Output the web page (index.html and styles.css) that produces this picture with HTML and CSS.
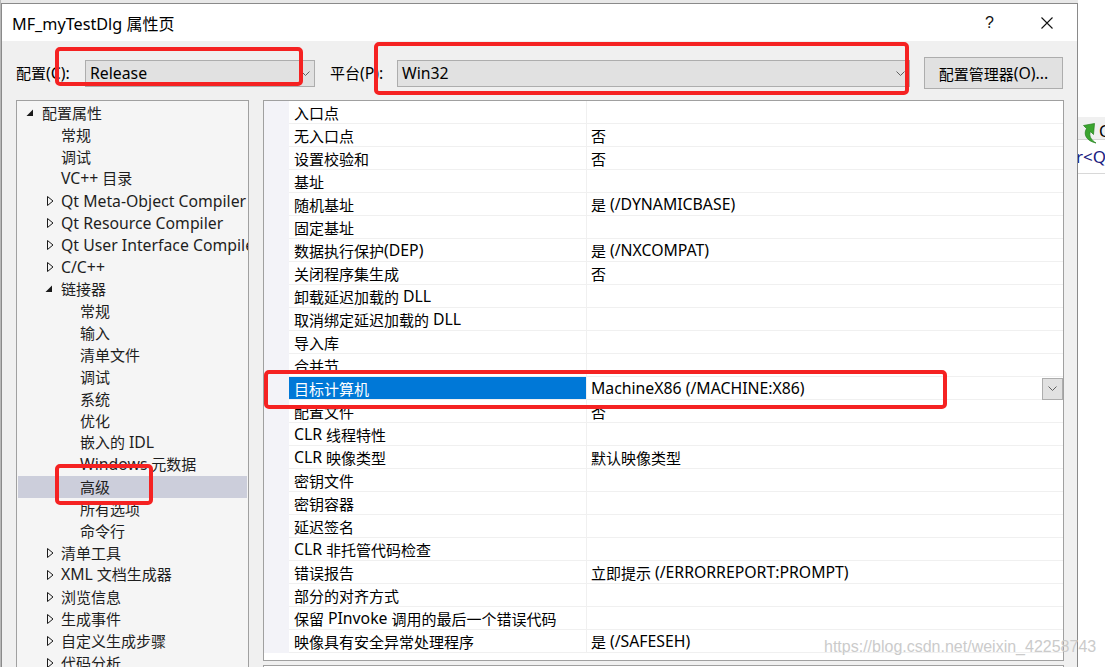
FILE: index.html
```html
<!DOCTYPE html>
<html>
<head>
<meta charset="utf-8">
<link rel="stylesheet" href="styles.css">
</head>
<body>
<div class="screen">
  <div class="edge"></div>
  <div class="dialog">
    <div class="titlebar">
      <span class="title"><span class="lat">MF_myTestDlg</span> 属性页</span>
      <span class="help">?</span>
      <svg class="close" width="12" height="12" viewBox="0 0 12 12"><path d="M0.5 0.5 L11.5 11.5 M11.5 0.5 L0.5 11.5" stroke="#111" stroke-width="1.1" fill="none"/></svg>
    </div>
    <div class="body">
      <div class="config-row">
        <span class="lbl lbl-config">配置<span class="lat">(C):</span></span>
        <div class="combo combo-config"><span class="lat">Release</span><svg class="chev" width="9" height="5" viewBox="0 0 9 5"><polyline points="0.5,0.5 4.5,4.5 8.5,0.5" fill="none" stroke="#606060" stroke-width="1"/></svg></div>
        <span class="lbl lbl-plat">平台<span class="lat">(P):</span></span>
        <div class="combo combo-plat"><span class="lat">Win32</span><svg class="chev" width="9" height="5" viewBox="0 0 9 5"><polyline points="0.5,0.5 4.5,4.5 8.5,0.5" fill="none" stroke="#606060" stroke-width="1"/></svg></div>
        <div class="mgr">配置管理器<span class="lat">(O)...</span></div>
      </div>
      <div class="main">
        <div class="tree">
          <div class="node l0"><span class="tog"><svg width="8" height="8" viewBox="0 0 8 8"><polygon points="7,0.5 7,7 0.5,7" fill="#1a1a1a"/></svg></span><span class="txt">配置属性</span></div>
          <div class="node l1"><span class="tog"></span><span class="txt">常规</span></div>
          <div class="node l1"><span class="tog"></span><span class="txt">调试</span></div>
          <div class="node l1"><span class="tog"></span><span class="txt"><span class="lat">VC++</span> 目录</span></div>
          <div class="node l1"><span class="tog"><svg class="col" width="7" height="10" viewBox="0 0 7 10"><polygon points="0.5,0.5 6,5 0.5,9.5" fill="none" stroke="#1a1a1a" stroke-width="1"/></svg></span><span class="txt lat">Qt Meta-Object Compiler</span></div>
          <div class="node l1"><span class="tog"><svg class="col" width="7" height="10" viewBox="0 0 7 10"><polygon points="0.5,0.5 6,5 0.5,9.5" fill="none" stroke="#1a1a1a" stroke-width="1"/></svg></span><span class="txt lat">Qt Resource Compiler</span></div>
          <div class="node l1"><span class="tog"><svg class="col" width="7" height="10" viewBox="0 0 7 10"><polygon points="0.5,0.5 6,5 0.5,9.5" fill="none" stroke="#1a1a1a" stroke-width="1"/></svg></span><span class="txt lat">Qt User Interface Compiler</span></div>
          <div class="node l1"><span class="tog"><svg class="col" width="7" height="10" viewBox="0 0 7 10"><polygon points="0.5,0.5 6,5 0.5,9.5" fill="none" stroke="#1a1a1a" stroke-width="1"/></svg></span><span class="txt lat">C/C++</span></div>
          <div class="node l1"><span class="tog"><svg width="8" height="8" viewBox="0 0 8 8"><polygon points="7,0.5 7,7 0.5,7" fill="#1a1a1a"/></svg></span><span class="txt">链接器</span></div>
          <div class="node l2"><span class="tog"></span><span class="txt">常规</span></div>
          <div class="node l2"><span class="tog"></span><span class="txt">输入</span></div>
          <div class="node l2"><span class="tog"></span><span class="txt">清单文件</span></div>
          <div class="node l2"><span class="tog"></span><span class="txt">调试</span></div>
          <div class="node l2"><span class="tog"></span><span class="txt">系统</span></div>
          <div class="node l2"><span class="tog"></span><span class="txt">优化</span></div>
          <div class="node l2"><span class="tog"></span><span class="txt">嵌入的 <span class="lat">IDL</span></span></div>
          <div class="node l2"><span class="tog"></span><span class="txt"><span class="lat">Windows</span> 元数据</span></div>
          <div class="node l2 sel"><span class="tog"></span><span class="txt">高级</span></div>
          <div class="node l2"><span class="tog"></span><span class="txt">所有选项</span></div>
          <div class="node l2"><span class="tog"></span><span class="txt">命令行</span></div>
          <div class="node l1"><span class="tog"><svg class="col" width="7" height="10" viewBox="0 0 7 10"><polygon points="0.5,0.5 6,5 0.5,9.5" fill="none" stroke="#1a1a1a" stroke-width="1"/></svg></span><span class="txt">清单工具</span></div>
          <div class="node l1"><span class="tog"><svg class="col" width="7" height="10" viewBox="0 0 7 10"><polygon points="0.5,0.5 6,5 0.5,9.5" fill="none" stroke="#1a1a1a" stroke-width="1"/></svg></span><span class="txt"><span class="lat">XML</span> 文档生成器</span></div>
          <div class="node l1"><span class="tog"><svg class="col" width="7" height="10" viewBox="0 0 7 10"><polygon points="0.5,0.5 6,5 0.5,9.5" fill="none" stroke="#1a1a1a" stroke-width="1"/></svg></span><span class="txt">浏览信息</span></div>
          <div class="node l1"><span class="tog"><svg class="col" width="7" height="10" viewBox="0 0 7 10"><polygon points="0.5,0.5 6,5 0.5,9.5" fill="none" stroke="#1a1a1a" stroke-width="1"/></svg></span><span class="txt">生成事件</span></div>
          <div class="node l1"><span class="tog"><svg class="col" width="7" height="10" viewBox="0 0 7 10"><polygon points="0.5,0.5 6,5 0.5,9.5" fill="none" stroke="#1a1a1a" stroke-width="1"/></svg></span><span class="txt">自定义生成步骤</span></div>
          <div class="node l1"><span class="tog"><svg class="col" width="7" height="10" viewBox="0 0 7 10"><polygon points="0.5,0.5 6,5 0.5,9.5" fill="none" stroke="#1a1a1a" stroke-width="1"/></svg></span><span class="txt">代码分析</span></div>
        </div>
        <div class="right-col">
          <div class="grid">
            <div class="row"><div class="gut"></div><div class="name">入口点</div><div class="val"></div></div>
            <div class="row"><div class="gut"></div><div class="name">无入口点</div><div class="val">否</div></div>
            <div class="row"><div class="gut"></div><div class="name">设置校验和</div><div class="val">否</div></div>
            <div class="row"><div class="gut"></div><div class="name">基址</div><div class="val"></div></div>
            <div class="row"><div class="gut"></div><div class="name">随机基址</div><div class="val">是&nbsp;<span class="lat">(/DYNAMICBASE)</span></div></div>
            <div class="row"><div class="gut"></div><div class="name">固定基址</div><div class="val"></div></div>
            <div class="row"><div class="gut"></div><div class="name">数据执行保护<span class="lat">(DEP)</span></div><div class="val">是&nbsp;<span class="lat">(/NXCOMPAT)</span></div></div>
            <div class="row"><div class="gut"></div><div class="name">关闭程序集生成</div><div class="val">否</div></div>
            <div class="row"><div class="gut"></div><div class="name">卸载延迟加载的&nbsp;<span class="lat">DLL</span></div><div class="val"></div></div>
            <div class="row"><div class="gut"></div><div class="name">取消绑定延迟加载的&nbsp;<span class="lat">DLL</span></div><div class="val"></div></div>
            <div class="row"><div class="gut"></div><div class="name">导入库</div><div class="val"></div></div>
            <div class="row"><div class="gut"></div><div class="name">合并节</div><div class="val"></div></div>
            <div class="row selrow"><div class="gut"></div><div class="name">目标计算机</div><div class="val"><span class="lat grow">MachineX86 (/MACHINE:X86)</span><div class="dd"><svg width="9" height="5" viewBox="0 0 9 5"><polyline points="0.5,0.5 4.5,4.5 8.5,0.5" fill="none" stroke="#606060" stroke-width="1"/></svg></div></div></div>
            <div class="row"><div class="gut"></div><div class="name">配置文件</div><div class="val">否</div></div>
            <div class="row"><div class="gut"></div><div class="name"><span class="lat">CLR</span>&nbsp;线程特性</div><div class="val"></div></div>
            <div class="row"><div class="gut"></div><div class="name"><span class="lat">CLR</span>&nbsp;映像类型</div><div class="val">默认映像类型</div></div>
            <div class="row"><div class="gut"></div><div class="name">密钥文件</div><div class="val"></div></div>
            <div class="row"><div class="gut"></div><div class="name">密钥容器</div><div class="val"></div></div>
            <div class="row"><div class="gut"></div><div class="name">延迟签名</div><div class="val"></div></div>
            <div class="row"><div class="gut"></div><div class="name"><span class="lat">CLR</span>&nbsp;非托管代码检查</div><div class="val"></div></div>
            <div class="row"><div class="gut"></div><div class="name">错误报告</div><div class="val">立即提示&nbsp;<span class="lat">(/ERRORREPORT:PROMPT)</span></div></div>
            <div class="row"><div class="gut"></div><div class="name">部分的对齐方式</div><div class="val"></div></div>
            <div class="row"><div class="gut"></div><div class="name">保留&nbsp;<span class="lat">PInvoke</span>&nbsp;调用的最后一个错误代码</div><div class="val"></div></div>
            <div class="row"><div class="gut"></div><div class="name">映像具有安全异常处理程序</div><div class="val">是&nbsp;<span class="lat">(/SAFESEH)</span></div></div>
          </div>
          <div class="desc"></div>
        </div>
      </div>
    </div>
  </div>
  <div class="side">
    <div class="side-top"></div>
    <div class="side-band">
      <svg class="arrow" width="15" height="22" viewBox="0 0 15 22"><path d="M14 21 C4.5 19 1 12.5 4.5 6.5 L1.5 3.5 L12.5 1.5 L11.5 12.5 L8.5 9.5 C6.5 13.5 9 18 14 21 Z" fill="#3ba52f" stroke="#22801c" stroke-width="0.7"/></svg>
      <span class="side-c">C</span>
    </div>
    <div class="side-code">r&lt;Q</div>
    <div class="side-rest"></div>
  </div>
  <div class="annot a1"></div>
  <div class="annot a2"></div>
  <div class="annot a3"></div>
  <div class="annot a4"></div>
  <div class="watermark">https://blog.csdn.net/weixin_42258743</div>
</div>
</body>
</html>
```
FILE: styles.css
```css
html, body {
  margin: 0;
  padding: 0;
}
body {
  width: 1105px;
  height: 667px;
  overflow: hidden;
  background: #e8e8e8;
  font-family: "Noto Sans", "Noto Sans CJK SC", sans-serif;
  font-size: 15px;
  color: #000;
}
.lat {
  font-size: 15.8px;
}
.screen {
  position: relative;
  display: flex;
  width: 1105px;
  height: 667px;
  overflow: hidden;
}
.edge {
  width: 1px;
  flex: none;
  background: #b8b8b8;
}
.dialog {
  flex: none;
  box-sizing: border-box;
  width: 1077px;
  height: 700px;
  margin-top: 3px;
  border: 1px solid #8a8a8a;
  border-bottom: none;
  background: #f0f0f0;
  display: flex;
  flex-direction: column;
}
.titlebar {
  height: 37px;
  background: #fff;
  display: flex;
  align-items: center;
  padding-left: 10px;
  flex: none;
}
.title {
  font-size: 16px;
  color: #000;
}
.title .lat {
  font-size: 16.2px;
}
.help {
  margin-left: auto;
  font-size: 16px;
  font-family: "Liberation Sans", sans-serif;
  color: #111;
}
.close {
  margin-left: 47px;
  margin-right: 24px;
}
.body {
  flex: 1;
  display: flex;
  flex-direction: column;
}
.config-row {
  display: flex;
  align-items: center;
  height: 32px;
  margin-top: 16px;
  padding-left: 14px;
}
.lbl {
  width: 69px;
  flex: none;
  white-space: nowrap;
}
.lbl-plat {
  width: 67px;
  margin-left: 15px;
}
.combo {
  box-sizing: border-box;
  height: 27px;
  background: #e1e1e1;
  border: 1px solid #adadad;
  display: flex;
  align-items: center;
  padding-left: 4px;
  padding-right: 4px;
  flex: none;
}
.combo span {
  flex: 1;
}
.combo-config {
  width: 230px;
}
.combo-plat {
  width: 513px;
}
.mgr {
  box-sizing: border-box;
  width: 139px;
  height: 32px;
  margin-left: 14px;
  background: #e1e1e1;
  border: 1px solid #adadad;
  display: flex;
  align-items: center;
  justify-content: center;
  flex: none;
  white-space: nowrap;
}
.main {
  display: flex;
  margin-top: 11px;
  padding-left: 14px;
  align-items: flex-start;
}
.tree {
  box-sizing: border-box;
  width: 233px;
  height: 600px;
  flex: none;
  background: #f5f5f5;
  border: 1px solid #a0a0a0;
  padding: 1px;
  overflow: hidden;
}
.node {
  box-sizing: border-box;
  height: 22px;
  padding-bottom: 2px;
  display: flex;
  align-items: center;
  white-space: nowrap;
  color: #1e1e1e;
}
.node .txt.lat {
  padding-top: 2px;
}
.node.sel {
  background: #cccedb;
}
.tog {
  width: 18px;
  flex: none;
  display: flex;
  align-items: center;
  padding-left: 2px;
  padding-top: 2px;
  box-sizing: border-box;
}
.tog .col {
  margin-left: 2px;
}
.l0 { padding-left: 6px; }
.l1 { padding-left: 25px; }
.l2 { padding-left: 44px; }
.right-col {
  margin-left: 14px;
  width: 801px;
  flex: none;
  display: flex;
  flex-direction: column;
}
.grid {
  box-sizing: border-box;
  height: 561px;
  border: 1px solid #a0a0a0;
  background: #fff;
  overflow: hidden;
}
.row {
  display: flex;
  height: 23px;
}
.gut {
  width: 25px;
  flex: none;
  background: #f3f3f8;
}
.name {
  box-sizing: border-box;
  width: 298px;
  flex: none;
  padding-left: 5px;
  border-right: 1px solid #f0f0f0;
  border-bottom: 1px solid #f0f0f0;
  display: flex;
  align-items: center;
  white-space: nowrap;
  overflow: hidden;
}
.val {
  box-sizing: border-box;
  flex: 1;
  padding-left: 4px;
  border-bottom: 1px solid #f0f0f0;
  display: flex;
  align-items: center;
  white-space: nowrap;
}
.val .grow {
  flex: 1;
}
.selrow .name {
  background: #0078d7;
  color: #fff;
}
.dd {
  box-sizing: border-box;
  width: 21px;
  height: 22px;
  background: #e1e1e1;
  border: 1px solid #adadad;
  display: flex;
  align-items: center;
  justify-content: center;
  flex: none;
  margin-top: 1px;
}
.desc {
  margin-top: 4px;
  height: 60px;
  border: 1px solid #a0a0a0;
  background: #fff;
}
.side {
  flex: 1;
  background: #fff;
  display: flex;
  flex-direction: column;
  overflow: hidden;
}
.side-top {
  height: 117px;
  background: #fff;
  flex: none;
}
.side-band {
  height: 22px;
  background: #f0f0f0;
  border-bottom: 1px solid #d6d6d6;
  display: flex;
  align-items: flex-start;
  padding-left: 4px;
  flex: none;
}
.arrow {
  margin-top: 5px;
  flex: none;
}
.side-c {
  margin-left: 2px;
  margin-top: 3px;
  font-size: 16px;
}
.side-code {
  height: 33px;
  display: flex;
  align-items: center;
  color: #1a1a80;
  font-size: 17px;
  border-bottom: 1px solid #d8d8d8;
  margin-left: -2px;
  white-space: nowrap;
}
.side-rest {
  flex: 1;
  background: #fff;
}
.annot {
  position: absolute;
  box-sizing: border-box;
  border: 4px solid #f52222;
  border-radius: 5px;
}
.a1 { left: 55px; top: 47px; width: 248px; height: 39px; }
.a2 { left: 374px; top: 42px; width: 535px; height: 53px; }
.a3 { left: 264px; top: 370px; width: 683px; height: 39px; }
.a4 { left: 55px; top: 464px; width: 98px; height: 41px; }
.watermark {
  position: absolute;
  left: 824px;
  top: 638px;
  font-family: "Liberation Sans", sans-serif;
  font-size: 16px;
  color: #cbcbcb;
  white-space: nowrap;
}
```
